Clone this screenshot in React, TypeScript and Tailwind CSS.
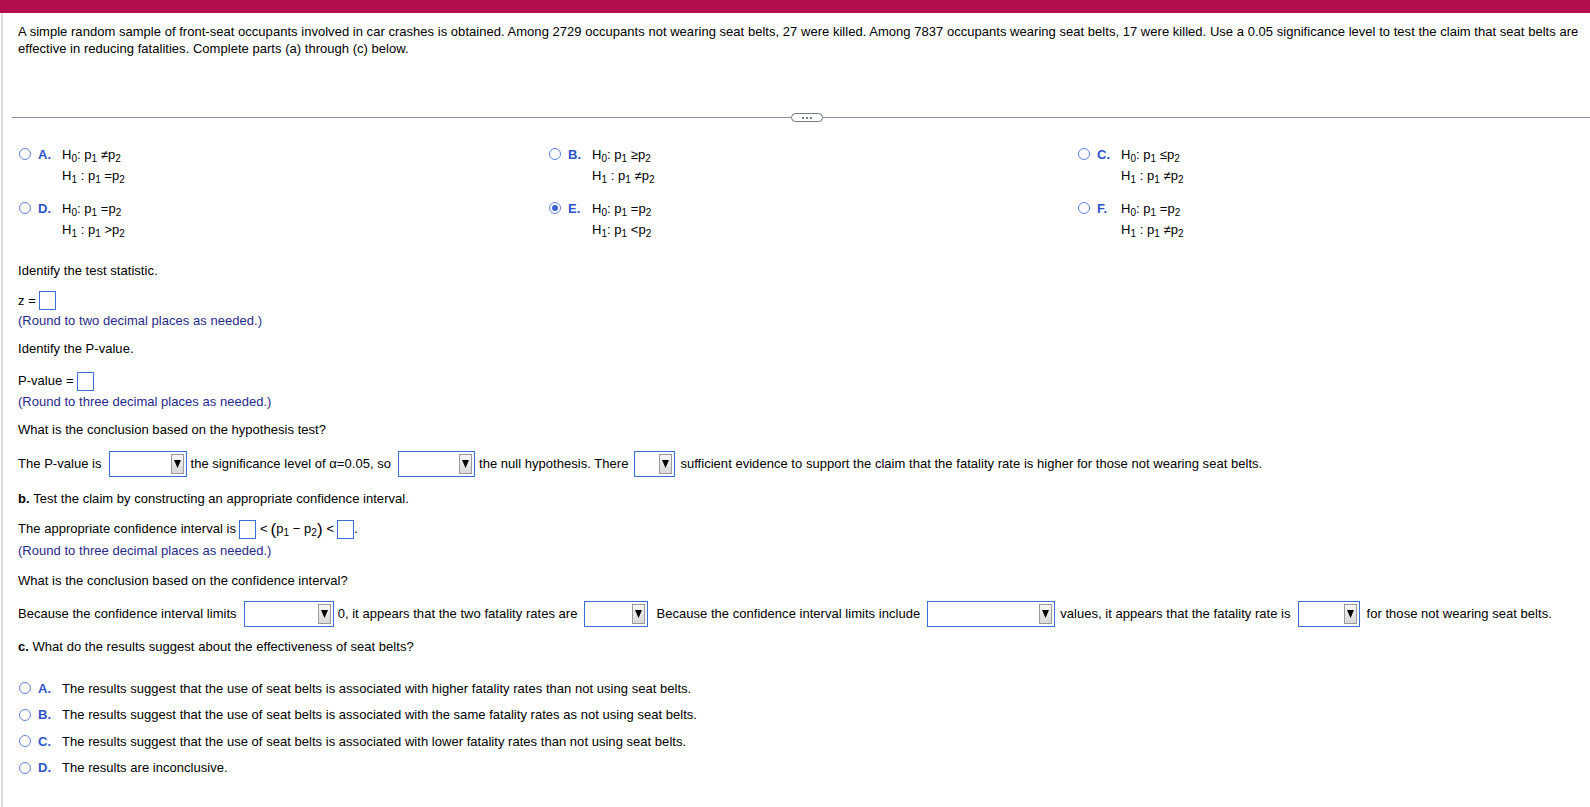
import React from "react";

const FONT = "font-['Liberation_Sans',Arial,sans-serif]";

function Sub({ children }: { children: React.ReactNode }) {
  return <span className="relative top-[3px] text-[10px] leading-none">{children}</span>;
}

function Radio({ sel = false }: { sel?: boolean }) {
  return (
    <span className="flex h-[12px] w-[12px] shrink-0 items-center justify-center rounded-full border-[1.5px] border-[#5f83dc] bg-white">
      {sel && <span className="h-[6px] w-[6px] rounded-full bg-[#3c63cf]" />}
    </span>
  );
}

function Box({ className = "" }: { className?: string }) {
  return <span className={`inline-block h-[19px] w-[17px] shrink-0 border border-[#3b6fd6] bg-white ${className}`} />;
}

function DD({ className = "" }: { className?: string }) {
  return (
    <span className={`inline-flex h-[26px] shrink-0 items-center justify-end border border-[#3b6fd6] bg-white pr-[2px] ${className}`}>
      <span className="flex h-[20px] w-[13px] items-center justify-center border border-[#9a9a9a] bg-gradient-to-b from-[#f7f7f7] to-[#d8d8d8]">
        <svg width="7" height="8" viewBox="0 0 7 8">
          <path d="M0 0H7L3.5 8Z" fill="#000" />
        </svg>
      </span>
    </span>
  );
}

function Hyp({ label, sel, h0, h1 }: { label: string; sel?: boolean; h0: React.ReactNode; h1: React.ReactNode }) {
  return (
    <div className="flex">
      <div className="mt-[4px]">
        <Radio sel={sel} />
      </div>
      <div className="ml-[7px] w-[24px] text-[13px] font-bold leading-[21px] text-[#2f54c8]">{label}</div>
      <div className="text-[13px] leading-[21px]">
        <div className="whitespace-nowrap">{h0}</div>
        <div className="whitespace-nowrap">{h1}</div>
      </div>
    </div>
  );
}

function H0({ rel }: { rel: string }) {
  return (
    <>
      H<Sub>0</Sub>: p<Sub>1</Sub> {rel}p<Sub>2</Sub>
    </>
  );
}
function H1({ rel, sp = true }: { rel: string; sp?: boolean }) {
  return (
    <>
      H<Sub>1</Sub>
      {sp ? " " : ""}: p<Sub>1</Sub> {rel}p<Sub>2</Sub>
    </>
  );
}

function COpt({ label, text }: { label: string; text: string }) {
  return (
    <div className="flex h-[26.5px] items-center pl-[1px]">
      <Radio />
      <span className="ml-[7px] w-[24px] font-bold text-[#2f54c8]">{label}</span>
      <span className="whitespace-nowrap">{text}</span>
    </div>
  );
}

export default function App() {
  return (
    <div className={`${FONT} min-h-[807px] w-[1590px] bg-white text-[13px] tracking-[0.03px] text-black`}>
      <div className="h-[13px] bg-[#b30e4d]" />
      <div className="ml-[1px] min-h-[794px] border-l-2 border-[#dcdce4] pl-[15px]">
        <div className="pt-[10px] leading-[17px]">
          <div className="whitespace-nowrap">
            A simple random sample of front-seat occupants involved in car crashes is obtained. Among 2729 occupants not wearing seat belts, 27 were killed. Among 7837 occupants wearing seat belts, 17 were killed. Use a 0.05 significance level to test the claim that seat belts are
          </div>
          <div className="whitespace-nowrap">effective in reducing fatalities. Complete parts (a) through (c) below.</div>
        </div>

        <div className="ml-[-6px] mt-[56px] flex h-[9px] items-center">
          <div className="h-[1px] w-[779px] bg-[#8a909c]" />
          <div className="flex h-[9px] w-[32px] items-center justify-center gap-[2px] rounded-full border-[1.5px] border-[#6c7684] bg-white">
            <span className="h-[2px] w-[2px] rounded-full bg-[#4a5360]" />
            <span className="h-[2px] w-[2px] rounded-full bg-[#4a5360]" />
            <span className="h-[2px] w-[2px] rounded-full bg-[#4a5360]" />
          </div>
          <div className="h-[1px] flex-1 bg-[#8a909c]" />
        </div>

        <div className="ml-[1px] mt-[22px] grid grid-cols-[530px_529px_1fr] gap-y-[12px]">
          <Hyp label="A." h0={<H0 rel="≠" />} h1={<H1 rel="=" />} />
          <Hyp label="B." h0={<H0 rel="≥" />} h1={<H1 rel=" ≠" />} />
          <Hyp label="C." h0={<H0 rel="≤" />} h1={<H1 rel=" ≠" />} />
          <Hyp label="D." h0={<H0 rel="=" />} h1={<H1 rel=">" />} />
          <Hyp label="E." sel h0={<H0 rel="=" />} h1={<H1 rel="<" sp={false} />} />
          <Hyp label="F." h0={<H0 rel="=" />} h1={<H1 rel="≠" />} />
        </div>

        <div className="mt-[21px] flex h-[20px] items-center">Identify the test statistic.</div>
        <div className="mt-[10px] flex h-[19px] items-center">
          <span>z =</span>
          <Box className="ml-[3px]" />
        </div>
        <div className="mt-[1px] flex h-[20px] items-center text-[#1f2a8a]">(Round to two decimal places as needed.)</div>
        <div className="mt-[8px] flex h-[20px] items-center">Identify the P-value.</div>
        <div className="mt-[12px] flex h-[20px] items-center">
          <span>P-value =</span>
          <Box className="ml-[3px]" />
        </div>
        <div className="mt-[1px] flex h-[20px] items-center text-[#1f2a8a]">(Round to three decimal places as needed.)</div>
        <div className="mt-[8px] flex h-[20px] items-center">What is the conclusion based on the hypothesis test?</div>

        <div className="mt-[11px] flex h-[26px] items-center whitespace-nowrap">
          <span>The P-value is</span>
          <DD className="ml-[7px] mr-[4px] w-[78px]" />
          <span>the significance level of α=0.05, so</span>
          <DD className="ml-[7px] mr-[4px] w-[77px]" />
          <span>the null hypothesis. There</span>
          <DD className="ml-[6px] mr-[5px] w-[41px]" />
          <span>sufficient evidence to support the claim that the fatality rate is higher for those not wearing seat belts.</span>
        </div>

        <div className="mt-[12px] flex h-[20px] items-center">
          <b>b.</b>&nbsp;Test the claim by constructing an appropriate confidence interval.
        </div>
        <div className="mt-[10px] flex h-[20px] items-center whitespace-nowrap">
          <span>The appropriate confidence interval is</span>
          <Box className="ml-[3px]" />
          <span className="ml-[4px]">&lt;</span>
          <span className="ml-[3px] text-[17px] leading-none">(</span>
          <span>
            p<Sub>1</Sub> − p<Sub>2</Sub>
          </span>
          <span className="text-[17px] leading-none">)</span>
          <span className="ml-[4px]">&lt;</span>
          <Box className="ml-[3px]" />
          <span>.</span>
        </div>
        <div className="mt-[2px] flex h-[20px] items-center text-[#1f2a8a]">(Round to three decimal places as needed.)</div>
        <div className="mt-[10px] flex h-[20px] items-center">What is the conclusion based on the confidence interval?</div>

        <div className="mt-[10px] flex h-[26px] items-center whitespace-nowrap">
          <span>Because the confidence interval limits</span>
          <DD className="ml-[7px] mr-[4px] w-[90px]" />
          <span>0, it appears that the two fatality rates are</span>
          <DD className="ml-[7px] mr-[8px] w-[64px]" />
          <span>Because the confidence interval limits include</span>
          <DD className="ml-[7px] mr-[5px] w-[128px]" />
          <span>values, it appears that the fatality rate is</span>
          <DD className="ml-[7px] mr-[7px] w-[62px]" />
          <span>for those not wearing seat belts.</span>
        </div>

        <div className="mt-[10px] flex h-[20px] items-center">
          <b>c.</b>&nbsp;What do the results suggest about the effectiveness of seat belts?
        </div>

        <div className="mt-[18px]">
          <COpt label="A." text="The results suggest that the use of seat belts is associated with higher fatality rates than not using seat belts." />
          <COpt label="B." text="The results suggest that the use of seat belts is associated with the same fatality rates as not using seat belts." />
          <COpt label="C." text="The results suggest that the use of seat belts is associated with lower fatality rates than not using seat belts." />
          <COpt label="D." text="The results are inconclusive." />
        </div>
      </div>
    </div>
  );
}
